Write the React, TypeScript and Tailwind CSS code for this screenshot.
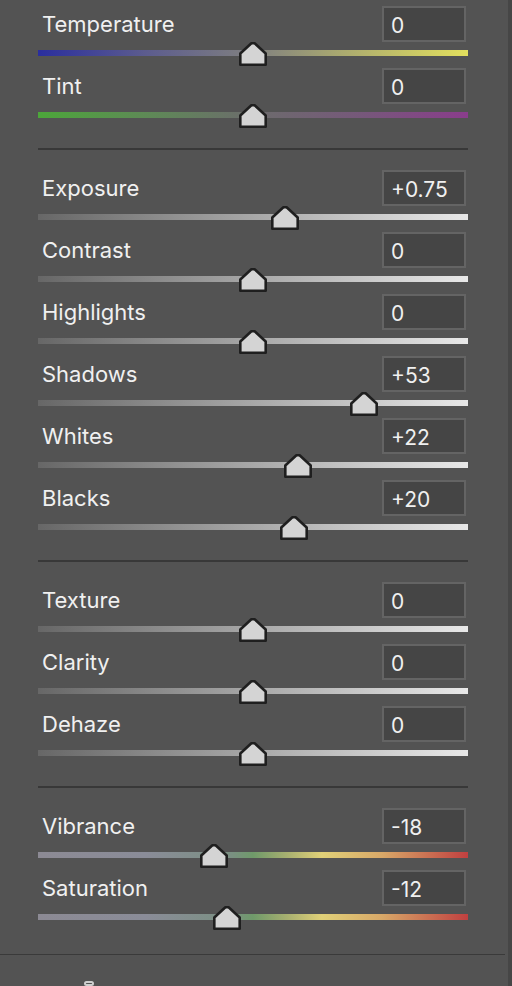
import React from 'react'

type Slider = {
  label: string
  value: string
  pos: number // thumb centre, px from track left
  track: string
}

const TONE = 'bg-[linear-gradient(to_right,#676767,#e8e8e8)]'
const TEMP = 'bg-[linear-gradient(to_right,#2a2e9e,#5c5c8e_25%,#808080_50%,#a9a870_70%,#e3e05e)]'
const TINT = 'bg-[linear-gradient(to_right,#4ca63a,#5e8a56_25%,#6c6c6c_50%,#76587a_75%,#8a3d8c)]'
const COLOR =
  'bg-[linear-gradient(to_right,#8c8a94,#8a8c98_25%,#7a9082_45%,#6f9a6a_50%,#a8b070_58%,#e0d078_66%,#d8a868_80%,#c04040)]'

const groups: Slider[][] = [
  [
    { label: 'Temperature', value: '0', pos: 215, track: TEMP },
    { label: 'Tint', value: '0', pos: 215, track: TINT },
  ],
  [
    { label: 'Exposure', value: '+0.75', pos: 247, track: TONE },
    { label: 'Contrast', value: '0', pos: 215, track: TONE },
    { label: 'Highlights', value: '0', pos: 215, track: TONE },
    { label: 'Shadows', value: '+53', pos: 326, track: TONE },
    { label: 'Whites', value: '+22', pos: 260, track: TONE },
    { label: 'Blacks', value: '+20', pos: 256, track: TONE },
  ],
  [
    { label: 'Texture', value: '0', pos: 215, track: TONE },
    { label: 'Clarity', value: '0', pos: 215, track: TONE },
    { label: 'Dehaze', value: '0', pos: 215, track: TONE },
  ],
  [
    { label: 'Vibrance', value: '-18', pos: 176, track: COLOR },
    { label: 'Saturation', value: '-12', pos: 189, track: COLOR },
  ],
]

function Thumb() {
  return (
    <svg width="28" height="24" viewBox="0 0 28 24" className="block">
      <polygon
        points="12.4,1.3 15.6,1.3 26.7,11.5 26.7,22.7 1.3,22.7 1.3,11.5"
        fill="#d4d4d4"
        stroke="#1f1f1f"
        strokeWidth="2.6"
        strokeLinejoin="round"
      />
    </svg>
  )
}

function SliderRow({ s, first }: { s: Slider; first: boolean }) {
  return (
    <div className={first ? '' : 'mt-3'}>
      <div className="flex items-center justify-between pr-[2px]">
        <span className="pl-[4px] text-[22px] leading-none text-[#f0f0f0]">{s.label}</span>
        <div className="flex h-[36px] w-[84px] items-center border-2 border-[#646464] bg-[#454545] pl-[7px] pt-[3px] text-[21px] leading-none text-[#f0f0f0]">
          {s.value}
        </div>
      </div>
      <div className={`relative mt-2 h-[6px] ${s.track}`}>
        <div className="absolute top-[-8px]" style={{ left: s.pos - 14 }}>
          <Thumb />
        </div>
      </div>
    </div>
  )
}

export default function App() {
  return (
    <div
      className="flex h-[986px] w-[512px] overflow-hidden bg-[#535353]"
      style={{ fontFamily: 'Inter, "Noto Sans", sans-serif' }}
    >
      <div className="flex w-[508px] flex-col">
        <div className="pl-[38px] pr-[40px] pt-[6px]">
          {groups.map((g, gi) => (
            <div key={gi}>
              {gi > 0 && <div className="mb-[20px] mt-[30px] h-[2px] bg-[#383838]" />}
              {g.map((s, i) => (
                <SliderRow key={s.label} s={s} first={i === 0} />
              ))}
            </div>
          ))}
        </div>
        <div className="mr-[3px] mt-[34px] h-[3px] bg-[#3a3a3a]" />
        <div className="ml-[84px] mt-[26px] h-[10px] w-[10px] rounded-full border-2 border-[#cfcfcf]" />
      </div>
      <div className="w-[4px] bg-[#464646]" />
    </div>
  )
}
